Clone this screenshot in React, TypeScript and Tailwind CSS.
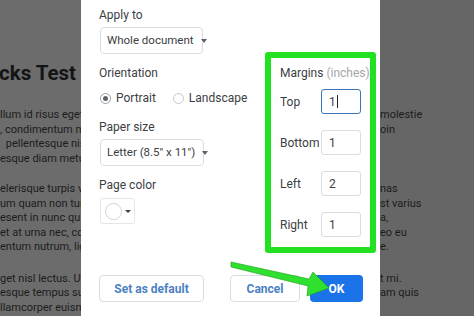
const leftParas = [
  ['llum id risus eget', ', condimentum m', ' pellentesque nis', 'esque diam metu'],
  ['elerisque turpis v', 'um quam non turp', 'esent in nunc qu', 'et at urna nec, co', 'entum nutrum, lig'],
  ['get nisl lectus. Ut', 'esque tempus sus', 'llamcorper euism'],
];

const rightParas = [
  ['molestie', 'oin', '', ''],
  ['nas', 'st varius', 'a,', 'eo eu', 'e.'],
  ['t mi.', 'am quis', ''],
];

const Paras = ({ paras, indent }: { paras: string[][]; indent?: boolean }) => (
  <div className="text-[11px] leading-[14.6px] text-[#1c1c1c]" style={{ fontFamily: 'Roboto, sans-serif' }}>
    {paras.map((p, i) => (
      <div key={i} className={i === 0 ? '' : i === 1 ? 'mt-[15.6px]' : 'mt-[16.6px]'}>
        {p.map((l, j) => (
          <div key={j} className={`whitespace-pre h-[14.6px] ${indent && i === 0 && j === 2 ? 'pl-[3px]' : ''}`}>
            {l}
          </div>
        ))}
      </div>
    ))}
  </div>
);

const Caret = () => (
  <span className="ml-[7px] inline-block w-0 h-0 border-l-[3.5px] border-r-[3.5px] border-t-[4px] border-l-transparent border-r-transparent border-t-[#5f6368]" />
);

const MarginRow = ({ label, value, focused }: { label: string; value: string; focused?: boolean }) => (
  <div className="flex items-center h-[25px]">
    <span className="w-[41px] text-[12px] text-[#3c4043]">{label}</span>
    <div
      className={`w-[40px] h-[25px] rounded-[3px] flex items-center pl-[7px] text-[12px] text-[#3c4043] ${
        focused ? 'border-[1.5px] border-[#3d74b8]' : 'border border-[#dadce0]'
      }`}
    >
      {value}
      {focused && <span className="ml-[1px] inline-block w-[1px] h-[13px] bg-[#202124]" />}
    </div>
  </div>
);

export default function App() {
  return (
    <div className="relative w-[474px] h-[316px] overflow-hidden flex" style={{ fontFamily: 'Roboto, "Liberation Sans", sans-serif' }}>
      {/* document behind, left part */}
      <div className="w-[81px] shrink-0 bg-[#6c6c6c] overflow-hidden">
        <div className="w-[200px] pt-[60px]">
          <div className="h-[26px] leading-[26px] text-[20.5px] font-bold text-[#141414] -ml-[1px]" style={{ fontFamily: 'Roboto, sans-serif' }}>
            cks Test
          </div>
          <div className="mt-[22px]">
            <Paras paras={leftParas} indent />
          </div>
        </div>
      </div>

      {/* dialog */}
      <div className="w-[299px] shrink-0 bg-white flex flex-col pl-[18px] pr-[4px] pb-[14px]">
        <div className="flex items-start">
          <div className="w-[166px] shrink-0 text-[12px] text-[#3c4043]">
            <div className="mt-[7px] h-[16px] leading-[16px]">Apply to</div>
            <div className="mt-[4px] ml-[1px] w-[103px] h-[27px] border border-[#dadce0] rounded-[4px] flex items-center pl-[6px] whitespace-nowrap text-[11.5px]">
              Whole document
              <Caret />
            </div>
            <div className="mt-[11px] h-[16px] leading-[16px]">Orientation</div>
            <div className="mt-[9px] h-[16px] flex items-center">
              <span className="ml-[1px] w-[11px] h-[11px] rounded-full border border-[#9aa0a6] flex items-center justify-center">
                <span className="w-[5px] h-[5px] rounded-full bg-[#5f6368]" />
              </span>
              <span className="ml-[5px]">Portrait</span>
              <span className="ml-[17px] w-[11px] h-[11px] rounded-full border border-[#c4c7cb]" />
              <span className="ml-[5px]">Landscape</span>
            </div>
            <div className="mt-[13px] h-[16px] leading-[16px]">Paper size</div>
            <div className="mt-[4px] ml-[1px] w-[104px] h-[27px] border border-[#dadce0] rounded-[4px] flex items-center pl-[6px] whitespace-nowrap text-[11.5px]">
              Letter (8.5" x 11")
              <Caret />
            </div>
            <div className="mt-[11px] h-[16px] leading-[16px]">Page color</div>
            <div className="mt-[5px] ml-[1px] w-[35px] h-[26px] border border-[#e3e5e8] rounded-[3px] flex items-center pl-[4px]">
              <span className="w-[17px] h-[17px] rounded-full border border-[#d0d3d7]" />
              <span className="ml-[3px] inline-block w-0 h-0 border-l-[3px] border-r-[3px] border-t-[3.5px] border-l-transparent border-r-transparent border-t-[#3c4043]" />
            </div>
          </div>

          {/* margins highlighted */}
          <div className="mt-[52px] w-[111px] h-[201px] border-[6px] border-[#22e022] rounded-[3px] pt-[7px] pl-[9px]">
            <div className="h-[16px] leading-[16px] text-[12px] text-[#3c4043] whitespace-nowrap">
              Margins <span className="text-[#a3a7ab]">(inches)</span>
            </div>
            <div className="mt-[8px] flex flex-col gap-[16px]">
              <MarginRow label="Top" value="1" focused />
              <MarginRow label="Bottom" value="1" />
              <MarginRow label="Left" value="2" />
              <MarginRow label="Right" value="1" />
            </div>
          </div>
        </div>

        <div className="mt-auto flex items-center h-[27px] text-[12px] font-bold">
          <button className="w-[105px] h-[27px] border border-[#dadce0] rounded-[4px] text-[#4b7fc4]">Set as default</button>
          <button className="ml-[26px] w-[70px] h-[27px] border border-[#dadce0] rounded-[4px] text-[#4b7fc4]">Cancel</button>
          <button className="ml-[10px] w-[53px] h-[27px] rounded-[4px] bg-[#1a73e8] text-white">OK</button>
        </div>
      </div>

      {/* document behind, right part */}
      <div className="flex-1 bg-[#666666] overflow-hidden pt-[108px]">
        <Paras paras={rightParas} />
      </div>

      {/* green pointer arrow */}
      <svg className="absolute inset-0 pointer-events-none" width="474" height="316" viewBox="0 0 474 316">
        <polygon
          points="231,262 309,279 313,272 329,288 307,296 308,286 231,267"
          fill="#2fe02f"
          stroke="#1c9c1c"
          strokeWidth="0.6"
          strokeLinejoin="round"
        />
      </svg>
    </div>
  );
}
